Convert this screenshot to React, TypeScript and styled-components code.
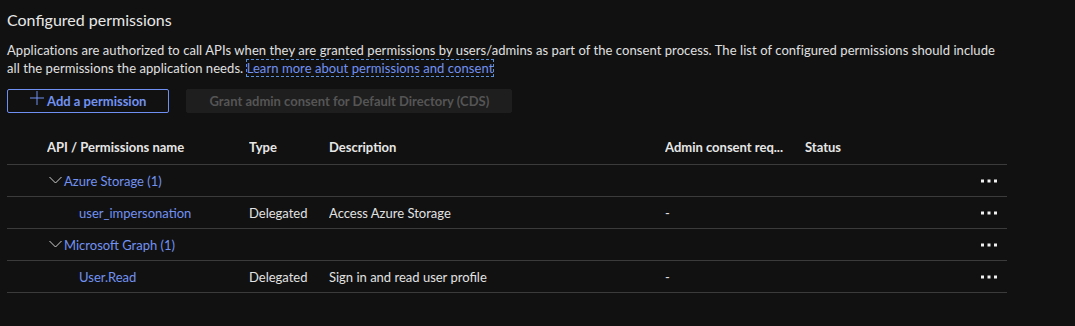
import React from 'react';
import styled, { createGlobalStyle } from 'styled-components';

const GlobalStyle = createGlobalStyle`
  html, body {
    margin: 0;
    padding: 0;
    background: #111111;
  }
  body {
    font-family: Lato, 'Noto Sans', 'Liberation Sans', sans-serif;
    color: #e2e2e2;
  }
`;

const Page = styled.div`
  padding: 9px 0 0 7px;
  width: 1000px;
`;

const Title = styled.h2`
  margin: 0;
  font-size: 16px;
  font-weight: 400;
  line-height: 22px;
  color: #e8e8e8;
`;

const Intro = styled.p`
  margin: 10px 0 0;
  font-size: 13px;
  line-height: 18px;
  letter-spacing: 0.07px;
  color: #e0e0e0;
`;

const Link = styled.a`
  color: #7192f2;
  text-decoration: none;
  outline: 1px dashed #5a8fd8;
  outline-offset: 0;
`;

const Toolbar = styled.div`
  display: flex;
  gap: 17px;
  margin-top: 12px;
`;

const Button = styled.button<{ $disabled?: boolean }>`
  display: flex;
  align-items: center;
  justify-content: center;
  gap: 3px;
  height: 24px;
  padding: 0 22px;
  border-radius: 2px;
  font-family: inherit;
  font-size: 13px;
  font-weight: 700;
  border: 1px solid ${(p) => (p.$disabled ? '#1e1e1e' : '#6f8ff2')};
  background: ${(p) => (p.$disabled ? '#1e1e1e' : 'transparent')};
  color: ${(p) => (p.$disabled ? '#555555' : '#7192f2')};
  cursor: ${(p) => (p.$disabled ? 'default' : 'pointer')};
`;

const Table = styled.div`
  margin-top: 17px;
  display: grid;
  grid-template-columns: 40px 202px 80px 336px 140px 1fr 40px;
`;

const Row = styled.div<{ $header?: boolean }>`
  display: contents;
  & > div {
    height: ${(p) => (p.$header ? '34px' : '31px')};
    border-bottom: 1px solid #3b3b3b;
    font-weight: ${(p) => (p.$header ? 700 : 400)};
    color: ${(p) => (p.$header ? '#e6e6e6' : '#e2e2e2')};
  }
`;

const Cell = styled.div<{ $indent?: number; $link?: boolean }>`
  display: flex;
  align-items: center;
  font-size: 13px;
  white-space: nowrap;
  overflow: hidden;
  padding-left: ${(p) => p.$indent ?? 0}px;
  color: ${(p) => (p.$link ? '#7192f2 !important' : 'inherit')};
`;

const Actions = styled(Cell)`
  justify-content: flex-end;
  padding-right: 10px;
`;

const Chevron = () => (
  <svg width="13" height="8" viewBox="0 0 13 8" style={{ marginRight: 2, marginTop: -2 }}>
    <path d="M0.5 1 L6.5 7 L12.5 1" fill="none" stroke="#d0d0d0" strokeWidth="1" />
  </svg>
);

const Plus = () => (
  <svg width="14" height="14" viewBox="0 0 14 14" style={{ marginTop: -6 }}>
    <path d="M7 0 V14 M0 7 H14" stroke="#7192f2" strokeWidth="1" />
  </svg>
);

const More = () => (
  <svg width="16" height="4" viewBox="0 0 16 4">
    <rect x="0" y="0.5" width="3" height="3" fill="#f0f0f0" />
    <rect x="6.5" y="0.5" width="3" height="3" fill="#f0f0f0" />
    <rect x="13" y="0.5" width="3" height="3" fill="#f0f0f0" />
  </svg>
);

type Perm = { name: string; type: string; description: string; admin: string };
type Group = { api: string; perms: Perm[] };

const groups: Group[] = [
  {
    api: 'Azure Storage (1)',
    perms: [{ name: 'user_impersonation', type: 'Delegated', description: 'Access Azure Storage', admin: '-' }],
  },
  {
    api: 'Microsoft Graph (1)',
    perms: [{ name: 'User.Read', type: 'Delegated', description: 'Sign in and read user profile', admin: '-' }],
  },
];

export default function App() {
  return (
    <>
      <GlobalStyle />
      <Page>
        <Title>Configured permissions</Title>
        <Intro>
          Applications are authorized to call APIs when they are granted permissions by users/admins as part of the
          consent process. The list of configured permissions should include all the permissions the application
          needs. <Link href="#">Learn more about permissions and consent</Link>
        </Intro>
        <Toolbar>
          <Button>
            <Plus />
            Add a permission
          </Button>
          <Button $disabled>Grant admin consent for Default Directory (CDS)</Button>
        </Toolbar>
        <Table>
          <Row $header>
            <Cell />
            <Cell>API / Permissions name</Cell>
            <Cell>Type</Cell>
            <Cell>Description</Cell>
            <Cell>Admin consent req...</Cell>
            <Cell>Status</Cell>
            <Cell />
          </Row>
          {groups.map((g) => (
            <React.Fragment key={g.api}>
              <Row>
                <Cell />
                <Cell $link $indent={2}>
                  <Chevron />
                  {g.api}
                </Cell>
                <Cell />
                <Cell />
                <Cell />
                <Cell />
                <Actions>
                  <More />
                </Actions>
              </Row>
              {g.perms.map((p) => (
                <Row key={p.name}>
                  <Cell />
                  <Cell $link $indent={32}>
                    {p.name}
                  </Cell>
                  <Cell>{p.type}</Cell>
                  <Cell>{p.description}</Cell>
                  <Cell>{p.admin}</Cell>
                  <Cell />
                  <Actions>
                    <More />
                  </Actions>
                </Row>
              ))}
            </React.Fragment>
          ))}
        </Table>
      </Page>
    </>
  );
}
